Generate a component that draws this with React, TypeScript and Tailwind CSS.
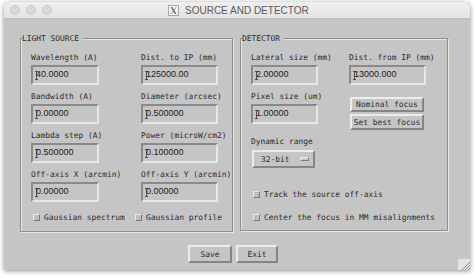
import React from "react";

const mono = "font-['DejaVu_Sans_Mono',monospace] text-[7.9px] leading-[11px] text-[#2a2a2a]";
const sunken = "border-2 border-t-[#8a8a8a] border-l-[#8a8a8a] border-b-[#e6e6e6] border-r-[#e6e6e6]";
const raised = "border-2 border-t-[#ececec] border-l-[#ececec] border-b-[#858585] border-r-[#858585]";

const Cursor = () => (
  <svg className="absolute left-[2px] top-[4px]" width="3" height="9" viewBox="0 0 3 9">
    <path d="M0 0.5H3M1.5 0.5V8.5M0 8.5H3" stroke="#333" strokeWidth="0.8" fill="none" />
  </svg>
);

const Field = ({ label, value, width }: { label: string; value: string; width: string }) => (
  <div className="flex flex-col">
    <div className={mono}>{label}</div>
    <div className={`relative mt-[2px] h-[20px] ${width} ${sunken} flex items-center pl-[3px]`}>
      <Cursor />
      <span className="font-['Liberation_Sans',Arial,sans-serif] text-[9px] text-[#222]">{value}</span>
    </div>
  </div>
);

const Check = ({ label }: { label: string }) => (
  <div className="flex items-center gap-[4px]">
    <span className="w-[7px] h-[7px] bg-[#bdbdbd] border border-t-[#e8e8e8] border-l-[#e8e8e8] border-b-[#7a7a7a] border-r-[#7a7a7a]" />
    <span className={mono}>{label}</span>
  </div>
);

const Frame = ({ title, className, children }: { title: string; className: string; children: React.ReactNode }) => (
  <div className={`relative border border-[#8e8e8e] shadow-[1px_1px_0_#e6e6e6,inset_1px_1px_0_#e6e6e6] ${className}`}>
    <span className={`absolute -top-[6px] left-[1px] bg-[#c5c5c5] pr-[4px] ${mono}`}>{title}</span>
    {children}
  </div>
);

const XLogo = () => (
  <svg width="11" height="11" viewBox="0 0 11 11">
    <rect x="0.5" y="0.5" width="10" height="10" fill="#f4f4f4" stroke="#a8a8a8" />
    <path d="M2.5 2h1.6l4.4 7h-1.6z" fill="#666" />
    <path d="M8.3 2L2.8 9" stroke="#666" strokeWidth="0.7" />
  </svg>
);

export default function App() {
  return (
    <div className="w-[474px] h-[278px] bg-white overflow-hidden">
      <div className="relative ml-[4px] mt-[2px] w-[466px] h-[268px] rounded-t-[5px] bg-[#c5c5c5] shadow-[0_1px_5px_rgba(0,0,0,0.45)] flex flex-col">
        <div className="h-[17px] rounded-t-[5px] bg-gradient-to-b from-[#efefef] to-[#e3e3e3] border-b border-[#bcbcbc] flex items-center relative">
          <div className="flex items-center gap-[6px] pl-[6px]">
            <span className="w-[10px] h-[10px] rounded-full bg-[#dadada] border border-[#cacaca]" />
            <span className="w-[10px] h-[10px] rounded-full bg-[#dadada] border border-[#cacaca]" />
            <span className="w-[10px] h-[10px] rounded-full bg-[#dadada] border border-[#cacaca]" />
          </div>
          <div className="flex items-center gap-[6px] ml-[116px]">
            <XLogo />
            <span className="font-['Liberation_Sans',Arial,sans-serif] text-[10px] text-[#5a5a5a]">SOURCE AND DETECTOR</span>
          </div>
        </div>

        <div className="flex pl-[16px] pt-[19px]">
          <Frame title="LIGHT SOURCE" className="w-[213px] h-[194px] pl-[10px] pt-[13px]">
            <div className="grid grid-cols-[110px_1fr] gap-y-[6px]">
              <Field label="Wavelength (A)" value="40.0000" width="w-[68px]" />
              <Field label="Dist. to IP (mm)" value="125000.00" width="w-[77px]" />
              <Field label="Bandwidth (A)" value="0.00000" width="w-[68px]" />
              <Field label="Diameter (arcsec)" value="0.500000" width="w-[77px]" />
              <Field label="Lambda step (A)" value="0.500000" width="w-[68px]" />
              <Field label="Power (microW/cm2)" value="0.100000" width="w-[77px]" />
              <Field label="Off-axis X (arcmin)" value="0.00000" width="w-[68px]" />
              <Field label="Off-axis Y (arcmin)" value="0.00000" width="w-[77px]" />
            </div>
            <div className="flex mt-[10px] ml-[2px]">
              <div className="w-[102px]">
                <Check label="Gaussian spectrum" />
              </div>
              <Check label="Gaussian profile" />
            </div>
          </Frame>

          <Frame title="DETECTOR" className="ml-[7px] w-[208px] h-[193px] pl-[10px] pt-[13px]">
            <div className="grid grid-cols-[98px_1fr] gap-y-[6px]">
              <Field label="Lateral size (mm)" value="2.00000" width="w-[67px]" />
              <Field label="Dist. from IP (mm)" value="13000.000" width="w-[77px]" />
              <Field label="Pixel size (um)" value="1.00000" width="w-[67px]" />
              <div className="flex flex-col gap-[2px] pt-[6px] pl-[1px] h-[33px]">
                <button className={`h-[15px] shrink-0 w-[74px] ${raised} ${mono} leading-[10px]`}>Nominal focus</button>
                <button className={`h-[16px] shrink-0 w-[74px] ${raised} ${mono} leading-[10px]`}>Set best focus</button>
              </div>
            </div>
            <div className={`mt-[12px] ${mono}`}>Dynamic range</div>
            <div className={`mt-[3px] ml-[1px] h-[18px] w-[63px] ${raised} flex items-center pl-[7px]`}>
              <span className={mono}>32-bit</span>
              <span className="ml-[10px] w-[9px] h-[4px] bg-[#c8c8c8] border border-t-[#eeeeee] border-l-[#eeeeee] border-b-[#7e7e7e] border-r-[#7e7e7e]" />
            </div>
            <div className="mt-[21px] ml-[2px]">
              <Check label="Track the source off-axis" />
            </div>
            <div className="mt-[12px] ml-[2px]">
              <Check label="Center the focus in MM misalignments" />
            </div>
          </Frame>
        </div>

        <div className="flex gap-[4px] ml-[184px] mt-[13px]">
          <button className={`h-[18px] w-[44px] ${raised} ${mono}`}>Save</button>
          <button className={`h-[18px] w-[42px] ${raised} ${mono}`}>Exit</button>
        </div>

        <svg className="absolute right-0 bottom-0" width="12" height="11" viewBox="0 0 12 11">
          <rect width="12" height="11" fill="#e2e2e2" />
          <path d="M4 11L12 3M7 11L12 6M10 11L12 9" stroke="#8a8a8a" strokeWidth="1" />
        </svg>
      </div>
    </div>
  );
}
